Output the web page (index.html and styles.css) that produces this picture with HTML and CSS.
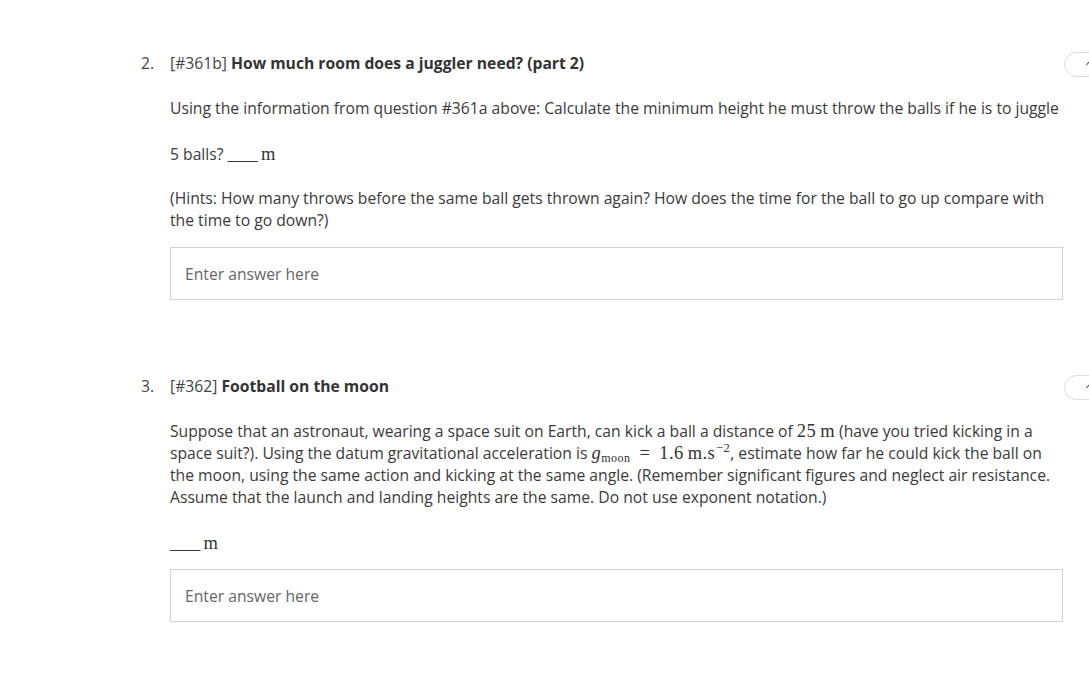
FILE: index.html
```html
<!DOCTYPE html>
<html>
<head>
<meta charset="utf-8">
<link rel="stylesheet" href="styles.css">
</head>
<body>
<div class="page">
  <section class="question q2">
    <div class="qhead">
      <span class="num">2.</span>
      <div class="title"><span class="tag">[#361b]</span> <b>How much room does a juggler need? (part 2)</b></div>
      <button class="pill"><span class="chev"></span></button>
    </div>
    <div class="body">
      <p class="p1">Using the information from question #361a above: Calculate the minimum height he must throw the balls if he is to juggle</p>
      <p class="p2">5 balls? <span class="blank">_____</span> <span class="math">m</span></p>
      <p class="p3">(Hints: How many throws before the same ball gets thrown again? How does the time for the ball to go up compare with the time to go down?)</p>
      <div class="answer">Enter answer here</div>
    </div>
  </section>
  <section class="question q3">
    <div class="qhead">
      <span class="num">3.</span>
      <div class="title"><span class="tag">[#362]</span> <b>Football on the moon</b></div>
      <button class="pill"><span class="chev"></span></button>
    </div>
    <div class="body">
      <p class="p4">Suppose that an astronaut, wearing a space suit on Earth, can kick a ball a distance of <span class="math">25<span class="sp"></span>m</span> (have you tried kicking in a space suit?). Using the datum gravitational acceleration is <span class="math"><i>g</i><sub>moon</sub><span class="eq">=</span>1.6<span class="sp"></span>m.s<sup>−2</sup></span>, estimate how far he could kick the ball on the moon, using the same action and kicking at the same angle. (Remember significant figures and neglect air resistance. Assume that the launch and landing heights are the same. Do not use exponent notation.)</p>
      <p class="p5"><span class="blank">_____</span> <span class="math">m</span></p>
      <div class="answer a2">Enter answer here</div>
    </div>
  </section>
</div>
</body>
</html>
```
FILE: styles.css
```css
html, body {
  margin: 0;
  padding: 0;
  background: #fff;
  overflow: hidden;
}
body {
  font-family: "Open Sans", "Liberation Sans", sans-serif;
  font-size: 15.7px;
  line-height: 22px;
  color: #3a3a3a;
}
.page {
  padding: 52px 0 0 141px;
}
.question {
  margin-right: -30px;
}
.q3 {
  margin-top: 75px;
}
.qhead {
  display: flex;
  align-items: flex-start;
  height: 22px;
}
.num {
  width: 29px;
  flex: none;
  color: #444;
}
.title {
  flex: 1;
}
.tag {
  color: #444;
}
.title b {
  font-weight: 700;
  color: #333;
}
.pill {
  flex: none;
  width: 55px;
  height: 25px;
  border: 1px solid #dcdcdc;
  border-radius: 13px;
  background: #fff;
  padding: 0;
  position: relative;
}
.chev {
  position: absolute;
  left: 22px;
  top: 9px;
  width: 4px;
  height: 4px;
  border-left: 1px solid #555;
  border-top: 1px solid #555;
  transform: rotate(45deg);
}
.body {
  padding-left: 29px;
  width: 893px;
}
.body p {
  margin: 0;
}
.p1 {
  margin-top: 23px !important;
}
.p2 {
  margin-top: 24px !important;
}
.p3 {
  margin-top: 22px !important;
}
.p4 {
  margin-top: 23px !important;
}
.p5 {
  margin-top: 24px !important;
}
.blank {
  letter-spacing: -1px;
}
.math {
  font-family: "Liberation Serif", "DejaVu Serif", serif;
  font-size: 18.5px;
  line-height: 0;
  letter-spacing: 0.4px;
  color: #333;
}
.sp {
  display: inline-block;
  width: 4px;
}
.math i {
  font-style: italic;
}
.eq {
  margin: 0 9px;
}
.math sub {
  font-size: 12px;
  letter-spacing: 0.5px;
  vertical-align: -3px;
  line-height: 0;
}
.math sup {
  font-size: 12.5px;
  margin-left: 1px;
  vertical-align: 7px;
  line-height: 0;
}
.answer {
  margin-top: 16px;
  height: 51px;
  border: 1px solid #d2d2de;
  padding: 0 14px;
  display: flex;
  align-items: center;
  color: #666;
}
.a2 {
  margin-top: 15px;
}
```
